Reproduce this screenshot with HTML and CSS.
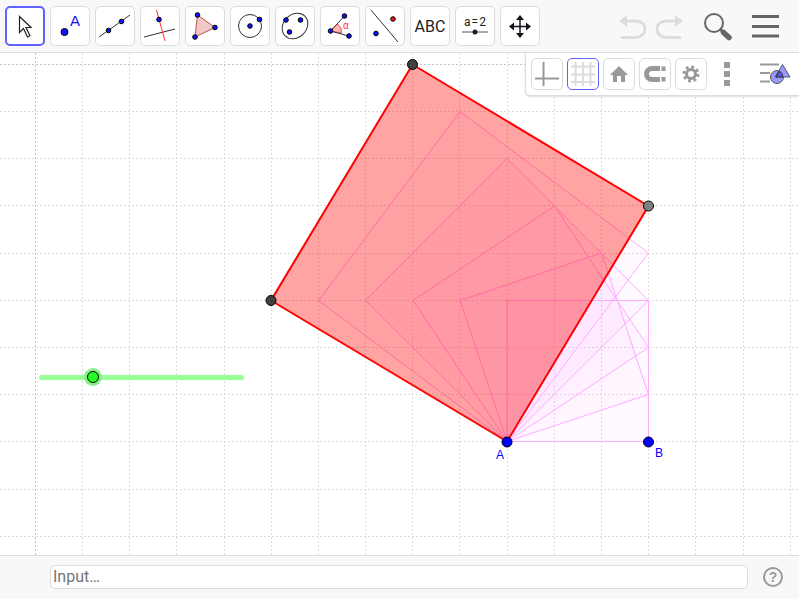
FILE: index.html
```
<!DOCTYPE html>
<html lang="en">
  <head>
    <meta charset="utf-8">
    <title>Turning square</title>
    <link rel="stylesheet" href="styles.css">
  </head>
  <body>
    <div class="app">
      <header class="toolbar">
        <div class="tools">
          <button class="tool selected" type="button" aria-label="Move">
            <svg viewBox="0 0 36 36"><path d="M12.500 8.500v16l4-4 4 8.500 2.500-1.200-4-8.300h5z" fill="#fff" stroke="#222" stroke-width="1.200"/></svg>
          </button>
          <button class="tool" type="button" aria-label="Point">
            <svg viewBox="0 0 36 36"><circle class="dot" cx="12.500" cy="24" r="3.500"/><text class="letter" x="18" y="18">A</text></svg>
          </button>
          <button class="tool" type="button" aria-label="Line">
            <svg viewBox="0 0 36 36"><path class="thin" d="M2 29L33 7"/><circle class="dot" cx="11.500" cy="22.500" r="2.300"/><circle class="dot" cx="24.500" cy="13.500" r="2.300"/></svg>
          </button>
          <button class="tool" type="button" aria-label="Perpendicular line">
            <svg viewBox="0 0 36 36"><path class="thin" d="M2 29L33 21"/><path d="M14.500 2l8.500 31" stroke="#f33"/><circle class="dot" cx="17" cy="11.500" r="2.300"/></svg>
          </button>
          <button class="tool" type="button" aria-label="Polygon">
            <svg viewBox="0 0 36 36"><path d="M10.500 7l17.500 12.500L8 29z" fill="#f0c8c8" stroke="#b65a44"/><circle class="dot" cx="10.500" cy="7" r="2.300"/><circle class="dot" cx="28" cy="19.500" r="2.300"/><circle class="dot" cx="8" cy="29" r="2.300"/></svg>
          </button>
          <button class="tool" type="button" aria-label="Circle with center">
            <svg viewBox="0 0 36 36"><circle class="thin" cx="18" cy="18" r="11.500"/><circle class="dot" cx="18" cy="18" r="2.300"/><circle class="dot" cx="27.500" cy="11.500" r="2.300"/></svg>
          </button>
          <button class="tool" type="button" aria-label="Ellipse">
            <svg viewBox="0 0 36 36"><ellipse class="thin" cx="18" cy="18" rx="14" ry="11.500" transform="rotate(-45 18 18)"/><circle class="dot" cx="9" cy="12" r="2.300"/><circle class="dot" cx="23.500" cy="12" r="2.300"/><circle class="dot" cx="12.500" cy="24" r="2.300"/></svg>
          </button>
          <button class="tool" type="button" aria-label="Angle">
            <svg viewBox="0 0 36 36"><path d="M8.500 23l7-7q5 4 4 9z" fill="#fbb" stroke="#f44"/><path class="thin" d="M22.500 8L8.500 23l18 5"/><circle class="dot" cx="22.500" cy="8" r="2.300"/><circle class="dot" cx="8.500" cy="23" r="2.300"/><circle class="dot" cx="27" cy="28" r="2.300"/><text class="alpha" x="21" y="21">α</text></svg>
          </button>
          <button class="tool" type="button" aria-label="Reflect about line">
            <svg viewBox="0 0 36 36"><path class="thin" d="M4 2l27 32"/><circle class="dot" cx="9" cy="25.500" r="2.300"/><circle class="dot red" cx="26" cy="11" r="2.300"/></svg>
          </button>
          <button class="tool abc" type="button">ABC</button>
          <button class="tool value" type="button" aria-label="Slider">
            <span class="equation">a<span>=</span>2</span>
            <svg viewBox="0 0 36 8"><path d="M5 4h26" stroke="#555"/><circle cx="18" cy="4" r="2.500" fill="#222"/></svg>
          </button>
          <button class="tool" type="button" aria-label="Move graphics view">
            <svg viewBox="0 0 36 36"><path d="M18 11v15M11 18.500h15" stroke="#14141e" stroke-width="1.500"/><path d="M18 7l4 5h-8zM18 30l4-5h-8zM7 18.500l5-4v8zM29 18.500l-5-4v8z" fill="#14141e"/></svg>
          </button>
        </div>
        <div class="actions">
          <button class="action" type="button" aria-label="Undo" disabled>
            <svg width="30" height="26" viewBox="0 0 30 26"><path d="M9 8h10q9 1 9 8t-9 8.500H4" stroke="#dcdcdc" stroke-width="2.800"/><path d="M2 8l8-6v12z" fill="#dcdcdc"/></svg>
          </button>
          <button class="action" type="button" aria-label="Redo" disabled>
            <svg width="30" height="26" viewBox="0 0 30 26"><path d="M21 8H11q-9 1-9 8t9 8.500h15" stroke="#dcdcdc" stroke-width="2.800"/><path d="M28 8l-8-6v12z" fill="#dcdcdc"/></svg>
          </button>
          <button class="action search" type="button" aria-label="Search">
            <svg width="30" height="30" viewBox="0 0 30 30"><circle cx="11" cy="12" r="9" stroke="#666" stroke-width="2"/><path d="M17 18l4 4" stroke="#666" stroke-width="3"/><path d="M20.500 21.500l5.500 5" stroke="#666" stroke-width="5.500" stroke-linecap="round"/></svg>
          </button>
          <button class="action" type="button" aria-label="Menu">
            <svg width="28" height="24" viewBox="0 0 28 24"><path d="M1 2.500h27M1 12.500h27M1 22h27" stroke="#666" stroke-width="3"/></svg>
          </button>
        </div>
      </header>

      <main class="graphics">
        <svg class="drawing">
          <g transform="translate(0 -53)">
            <g class="grid">
              <path d="M82.500 53v2000M129.500 53v2000M176.500 53v2000M224.500 53v2000M271.500 53v2000M318.500 53v2000M365.500 53v2000M412.500 53v2000M459.500 53v2000M507.500 53v2000M554.500 53v2000M601.500 53v2000M648.500 53v2000M695.500 53v2000M743.500 53v2000M790.500 53v2000"/>
              <path d="M0 111.500h3000M0 158.500h3000M0 205.500h3000M0 253.500h3000M0 300.500h3000M0 347.500h3000M0 394.500h3000M0 441.500h3000M0 489.500h3000M0 536.500h3000"/>
              <path class="major" d="M35.500 53v2000M0 64.500h3000"/>
            </g>
            <g class="traces">
              <path d="M507 441.500H648.500V300.500H507z"/>
              <path d="M507 441.500L648.500 394.500L601.500 253L460 300.500z"/>
              <path d="M507 441.500L648.500 347.500L554.500 206L413 300.500z"/>
              <path d="M507 441.500L648.500 300.500L507 158.500L365.500 300.500z"/>
              <path d="M507 441.500L648.500 253L460 111.500L318.500 300.500z"/>
            </g>
            <path class="square" d="M507 441.500L648.500 206L412.500 64.500L271 300.500z"/>
            <g class="points">
              <circle cx="412.500" cy="64.500" r="5"/>
              <circle cx="271" cy="300.500" r="5"/>
              <circle class="light" cx="648.500" cy="206" r="5"/>
              <circle class="free" cx="507" cy="442" r="5"/>
              <circle class="free" cx="648.500" cy="442" r="5"/>
            </g>
            <text class="label" x="496" y="459">A</text>
            <text class="label" x="655" y="457">B</text>
          </g>
        </svg>
        <input class="step" type="range" min="0" max="20" value="5" aria-label="Step">

        <div class="stylebar">
          <button class="style" type="button" aria-label="Show axes">
            <svg viewBox="0 0 30 30"><path d="M11.500 3v24M3 19.500h24" stroke="#999" stroke-width="2"/></svg>
          </button>
          <button class="style selected" type="button" aria-label="Show grid">
            <svg viewBox="0 0 30 30"><path d="M7.500 3v24M15 3v24M22.500 3v24M3 7.500h24M3 15.500h24M3 23h24" stroke="#dcdcdc" stroke-width="2"/></svg>
          </button>
          <button class="style" type="button" aria-label="Standard view">
            <svg viewBox="0 0 30 30"><path d="M15 7l9 9h-3v7h-4v-6h-4v6H9v-7H6z" fill="#999"/></svg>
          </button>
          <button class="style" type="button" aria-label="Point capturing">
            <svg viewBox="0 0 30 30"><path d="M20 9.500h-8a5.500 5.500 0 0 0 0 11h8" stroke="#999" stroke-width="5"/><path d="M21.500 7.500h4v4.500h-4zM21.500 18h4v4.500h-4z" fill="#999"/></svg>
          </button>
          <button class="style" type="button" aria-label="Settings">
            <svg viewBox="0 0 30 30"><circle cx="15" cy="15" r="4.500" stroke="#999" stroke-width="3"/><circle cx="15" cy="15" r="7" stroke="#999" stroke-width="3" stroke-dasharray="2.800 2.700"/></svg>
          </button>
          <button class="style plain" type="button" aria-label="More">
            <svg viewBox="0 0 30 30"><path d="M12 3h6v6h-6zM12 12h6v6h-6zM12 21h6v6h-6z" fill="#999"/></svg>
          </button>
          <button class="style plain wide" type="button" aria-label="Objects">
            <svg viewBox="0 0 32 30"><path d="M0 5.500h19M0 14h10M0 22.500h10" stroke="#999" stroke-width="2"/><circle cx="17" cy="18" r="6.500" fill="#99f" stroke="#555"/><path d="M22.500 5.500l7.500 12.500H15z" fill="#99f" stroke="#555"/><path d="M19.500 12q3 2 3.500 6h-7z" fill="#55f" stroke="#333"/></svg>
          </button>
        </div>
      </main>

      <footer class="inputbar">
        <input class="command" type="text" placeholder="Input…" aria-label="Input">
        <button class="help" type="button">?</button>
      </footer>
    </div>
  </body>
</html>
```
FILE: styles.css
```
* {
  box-sizing: border-box;
}
body {
  margin: 0;
  font-family: "Liberation Sans", Arial, sans-serif;
}
button {
  padding: 0;
  border: 0;
  background: none;
}
svg {
  display: block;
  fill: none;
}
.app {
  display: flex;
  flex-direction: column;
  height: 100vh;
  padding: 0 1px 1px 0;
}
.toolbar {
  display: flex;
  justify-content: space-between;
  align-items: center;
  padding: 0 20px 0 5px;
  height: 53px;
  background: #f8f8f8;
  border-bottom: 1px solid #dcdcdc;
}
.tools {
  display: flex;
  gap: 5px;
}
.tool {
  width: 40px;
  height: 40px;
  border: 1px solid #dcdcdc;
  border-radius: 5px;
  background: #fff;
  padding: 1px;
}
.tool.selected {
  border: 2px solid #6161ff;
  padding: 0;
}
.tool svg {
  width: 36px;
}
.thin {
  stroke: #333;
}
.dot {
  fill: #11f;
  stroke: #000;
}
.dot.red {
  fill: #f11;
}
.letter {
  font: 15px "Liberation Sans", sans-serif;
  fill: #11f;
}
.alpha {
  font: 10px "Liberation Sans", sans-serif;
  fill: #f33;
}
.abc {
  font: 16px Roboto, sans-serif;
  color: #222;
}
.value {
  font: 12px/12px Roboto, sans-serif;
  color: #222;
}
.equation span {
  margin: 0 1px;
}
.actions {
  display: flex;
  align-items: center;
  gap: 8px;
}
.search {
  padding: 0 10px;
}
.graphics {
  position: relative;
  flex: 1;
  min-height: 0;
  overflow: hidden;
  background: #fff;
}
.drawing {
  width: 100%;
  height: 100%;
}
.grid {
  stroke: #dcdcdc;
  stroke-dasharray: 2 2;
}
.grid .major {
  stroke: #c4c4c4;
}
.traces {
  fill: #f9f;
  fill-opacity: 0.05;
  stroke: #faf;
}
.square {
  fill: #f00;
  fill-opacity: 0.36;
  stroke: #f00;
  stroke-width: 2;
}
.points {
  fill: #404040;
  stroke: #000;
}
.points .light {
  fill: #808080;
}
.points .free {
  fill: #00f;
}
.label {
  font: 12px "Liberation Sans", sans-serif;
  fill: #00f;
}
.step {
  position: absolute;
  left: 39px;
  top: 314px;
  width: 205px;
  height: 20px;
  margin: 0;
  background: none;
  appearance: none;
}
.step::-webkit-slider-runnable-track {
  height: 5px;
  border-radius: 3px;
  background: #99ff99;
}
.step::-webkit-slider-thumb {
  appearance: none;
  width: 12px;
  height: 12px;
  margin-top: -4px;
  border: 1px solid #000;
  border-radius: 50%;
  background: #2f2;
  box-shadow: 0 0 0 3px #8e8;
}
.stylebar {
  position: absolute;
  top: 0;
  right: 0;
  display: flex;
  gap: 4px;
  padding: 5px 6px 5px 5px;
  background: #fff;
  border: 1px solid #dcdcdc;
  border-width: 0 0 1px 1px;
  border-radius: 0 0 0 5px;
  box-shadow: 0 1px 2px #ddd;
}
.style {
  width: 32px;
  height: 32px;
  border: 1px solid #dcdcdc;
  border-radius: 5px;
}
.style.selected {
  border-color: #6161ff;
}
.style.plain {
  border-color: transparent;
}
.style.wide {
  width: 34px;
  margin-left: 12px;
}
.inputbar {
  display: flex;
  align-items: center;
  gap: 15px;
  height: 44px;
  padding: 0 16px 2px 50px;
  background: #f8f8f8;
  border-top: 1px solid #dcdcdc;
}
.command {
  flex: 1;
  min-width: 0;
  height: 24px;
  padding: 0 2px;
  border: 1px solid #dcdcdc;
  border-radius: 5px;
  background: #fff;
  font: 16px Roboto, sans-serif;
}
.command::placeholder {
  color: #757575;
}
.help {
  width: 20px;
  height: 20px;
  border: 2px solid #999;
  border-radius: 50%;
  color: #999;
  font: bold 14px/16px "Liberation Sans", sans-serif;
}
```
